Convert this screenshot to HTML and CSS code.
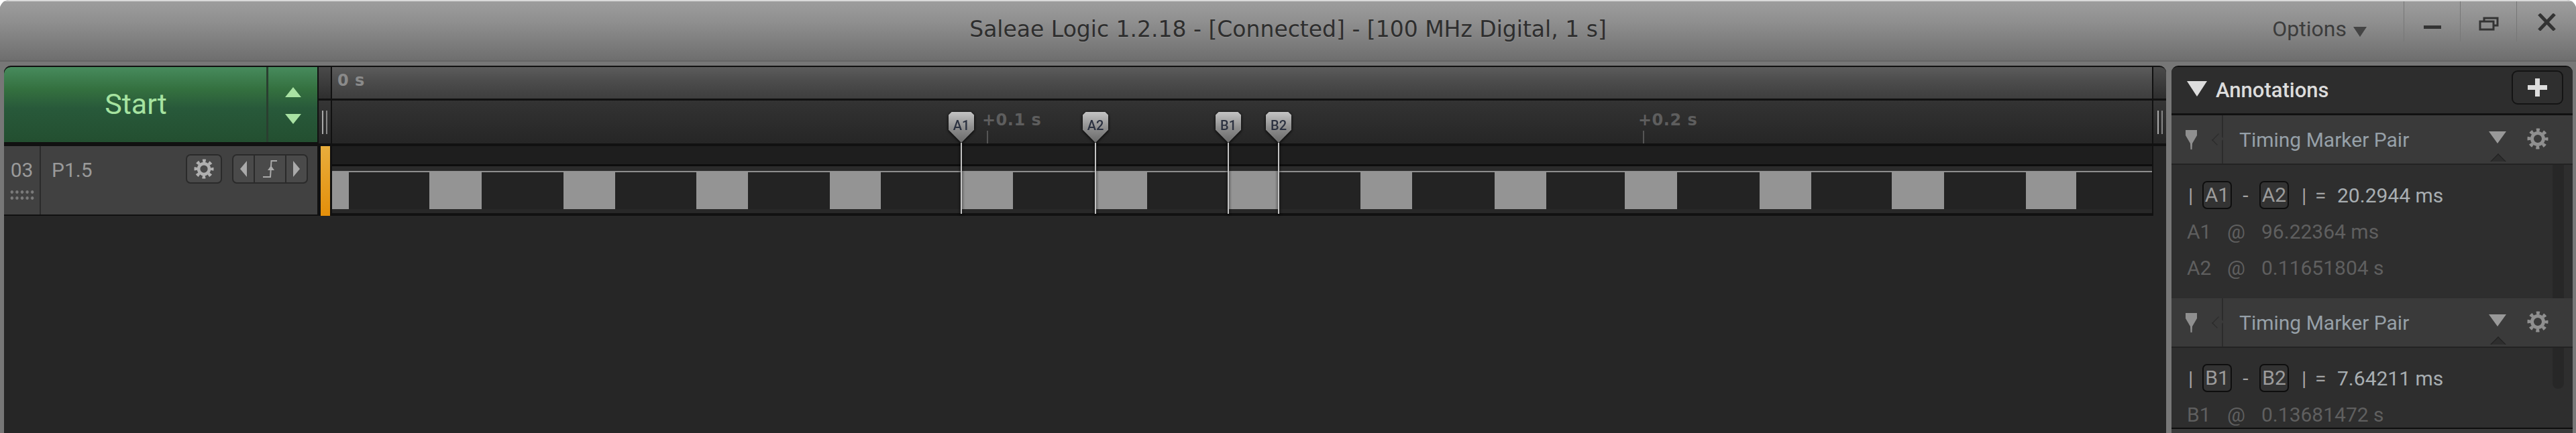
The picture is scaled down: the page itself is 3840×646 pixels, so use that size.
FILE: index.html
```html
<!DOCTYPE html>
<html lang="en">
<head>
  <meta charset="UTF-8" />
  <title>Saleae Logic 1.2.18 - [Connected] - [100 MHz Digital, 1 s]</title>
  <link rel="stylesheet" href="styles.css">
</head>
<body>
  <svg class="defs" width="0" height="0">
    <symbol id="gear" viewBox="0 0 32 32">
      <circle cx="16" cy="16" r="8.5" fill="none" stroke="currentColor" stroke-width="5" />
      <circle cx="16" cy="16" r="13" fill="none" stroke="currentColor" stroke-width="5" stroke-dasharray="5 5.21" stroke-dashoffset="2.5" />
    </symbol>
    <symbol id="pin" viewBox="0 0 19 29">
      <path d="M1 0 H18 V8 L11 20 L10.5 29 H8.5 L8 20 L1 8 Z" fill="currentColor" />
    </symbol>
  </svg>

  <div class="window">
    <header class="titlebar">
      <div class="title">Saleae Logic 1.2.18 - [Connected] - [100 MHz Digital, 1 s]</div>
      <div class="options">Options <span class="tri tri-down options-arrow"></span></div>
      <div class="win-btn">
        <svg width="26" height="5"><rect width="26" height="5" fill="#333" /></svg>
      </div>
      <div class="win-btn">
        <svg width="30" height="21" viewBox="0 0 30 21" fill="none" stroke="#333" stroke-width="3">
          <path d="M8 6 V2 H28 V13 H22" />
          <rect x="2" y="7" width="20" height="12" />
        </svg>
      </div>
      <div class="win-btn">
        <svg width="27" height="26" viewBox="0 0 27 26" fill="none" stroke="#333" stroke-width="5">
          <path d="M2 1 L25 25 M25 1 L2 25" />
        </svg>
      </div>
    </header>

    <main class="frame">
      <section class="workspace">
        <div class="top-row">
          <div class="start-btn">
            <div class="start-label">Start</div>
            <div class="start-arrows">
              <span class="tri tri-up start-arrow"></span>
              <span class="tri tri-down start-arrow"></span>
            </div>
          </div>
          <div class="ruler">
            <div class="ruler-line ruler-major">
              <div class="ruler-cap"></div>
              <div class="ruler-main"><span class="tick-zero">0 s</span></div>
              <div class="ruler-cap ruler-cap-end"></div>
            </div>
            <div class="ruler-line ruler-minor">
              <div class="ruler-cap"><span class="grip"></span></div>
              <div class="ruler-main"></div>
              <div class="ruler-cap ruler-cap-end"><span class="grip"></span></div>
            </div>
          </div>
        </div>

        <div class="channel-row">
          <div class="channel-info">
            <div class="channel-num">
              <span>03</span>
              <span class="dots"></span>
            </div>
            <div class="channel-name">P1.5</div>
            <div class="tool-btn gear-btn"><svg class="gear-icon"><use href="#gear" /></svg></div>
            <div class="tool-btn edge-group">
              <div class="edge-side"><span class="tri tri-left"></span></div>
              <div class="edge-mid">
                <svg width="22" height="26" viewBox="0 0 22 26" fill="none" stroke="#aaa" stroke-width="2">
                  <path d="M0 25 H11 L12.5 1 H21" />
                  <path d="M7 15 H17 L12 8 Z" fill="#aaa" stroke="none" />
                </svg>
              </div>
              <div class="edge-side"><span class="tri tri-right"></span></div>
            </div>
          </div>
          <div class="trigger-bar"></div>
          <div class="signal">
            <div class="signal-top"></div>
            <svg class="wave" width="2713" height="70" viewBox="0 0 2713 70">
              <rect width="2713" height="2" y="7" fill="#8e8e8e" />
              <g fill="#949494">
                <rect x="0" y="8" width="25" height="56" />
                <rect x="145" y="8" width="78" height="56" />
                <rect x="345" y="8" width="77" height="56" />
                <rect x="543" y="8" width="77" height="56" />
                <rect x="742" y="8" width="76" height="56" />
                <rect x="938" y="8" width="77" height="56" />
                <rect x="1138" y="8" width="77" height="56" />
                <rect x="1336" y="8" width="75" height="56" />
                <rect x="1533" y="8" width="77" height="56" />
                <rect x="1733" y="8" width="77" height="56" />
                <rect x="1927" y="8" width="78" height="56" />
                <rect x="2128" y="8" width="77" height="56" />
                <rect x="2325" y="8" width="78" height="56" />
                <rect x="2525" y="8" width="75" height="56" />
              </g>
            </svg>
          </div>
          <div class="ruler-cap ruler-cap-end channel-cap"></div>
        </div>

        <div class="empty-area"></div>

        <!-- time labels and markers sit on the timeline by time value -->
        <div class="tick-label" style="left: 1458px">+0.1 s</div>
        <div class="tick-mark" style="left: 1465px"></div>
        <div class="tick-label" style="left: 2436px">+0.2 s</div>
        <div class="tick-mark" style="left: 2443px"></div>

        <div class="marker" style="left: 1408px"><span class="marker-tag">A1</span><span class="marker-line"></span></div>
        <div class="marker" style="left: 1608px"><span class="marker-tag">A2</span><span class="marker-line"></span></div>
        <div class="marker" style="left: 1806px"><span class="marker-tag">B1</span><span class="marker-line"></span></div>
        <div class="marker" style="left: 1881px"><span class="marker-tag">B2</span><span class="marker-line"></span></div>
      </section>

      <aside class="annotations">
        <div class="ann-header">
          <span class="tri tri-down ann-arrow"></span>
          <span class="ann-title">Annotations</span>
          <div class="add-btn">
            <svg width="29" height="27" viewBox="0 0 29 27"><path d="M11 0 H18 V10 H29 V17 H18 V27 H11 V17 H0 V10 H11 Z" fill="#ddd" /></svg>
          </div>
        </div>

        <div class="ann-list">
          <div class="ann-scroll"></div>

          <div class="card">
            <div class="card-head">
              <div class="card-pin"><svg class="pin-icon"><use href="#pin" /></svg></div>
              <div class="card-title">Timing Marker Pair</div>
              <span class="tri tri-down card-arrow"></span>
              <svg class="card-gear"><use href="#gear" /></svg>
              <span class="card-notch"></span>
            </div>
            <div class="card-body">
              <div class="calc-row">
                <span class="bar">|</span><span class="chip">A1</span><span class="minus">-</span><span class="chip">A2</span><span class="bar bar-end">|</span><span class="equals">=</span><span class="result">20.2944 ms</span>
              </div>
              <div class="pos-row"><span class="pos-name">A1</span><span class="pos-at">@</span><span>96.22364 ms</span></div>
              <div class="pos-row"><span class="pos-name">A2</span><span class="pos-at">@</span><span>0.11651804 s</span></div>
            </div>
          </div>

          <div class="card">
            <div class="card-head">
              <div class="card-pin"><svg class="pin-icon"><use href="#pin" /></svg></div>
              <div class="card-title">Timing Marker Pair</div>
              <span class="tri tri-down card-arrow"></span>
              <svg class="card-gear"><use href="#gear" /></svg>
              <span class="card-notch"></span>
            </div>
            <div class="card-body">
              <div class="calc-row">
                <span class="bar">|</span><span class="chip">B1</span><span class="minus">-</span><span class="chip">B2</span><span class="bar bar-end">|</span><span class="equals">=</span><span class="result">7.64211 ms</span>
              </div>
              <div class="pos-row"><span class="pos-name">B1</span><span class="pos-at">@</span><span>0.13681472 s</span></div>
            </div>
          </div>
        </div>
        <div class="ann-footer"></div>
      </aside>
    </main>
  </div>
</body>
</html>
```

FILE: styles.css
```css
* {
  box-sizing: border-box;
  font-family: Roboto, "Liberation Sans", sans-serif;
}

html, body {
  height: 100%;
}

body {
  margin: 0;
  background-color: #fff;
  overflow: hidden;
}

.defs {
  position: absolute;
}

.window {
  display: flex;
  flex-direction: column;
  height: 646px;
  background-color: #777;
  border-radius: 14px 14px 0 0;
  overflow: hidden;
}

/* Triangles */
.tri {
  display: inline-block;
  width: 0;
  height: 0;
  border-style: solid;
  border-color: transparent;
}

.tri-up {
  border-width: 0 12px 15px 12px;
  border-bottom-color: #a9e2a3;
}

.tri-down {
  border-width: 15px 12px 0 12px;
  border-top-color: #a9e2a3;
}

.tri-left {
  border-width: 12px 10px 12px 0;
  border-right-color: #aaa;
}

.tri-right {
  border-width: 12px 0 12px 10px;
  border-left-color: #aaa;
}

/* Title bar */
.titlebar {
  display: flex;
  align-items: flex-start;
  flex: 0 0 92px;
  position: relative;
  background: linear-gradient(to bottom, #9c9c9c 2%, #8f8f8f 35%, #6e6e6e 100%);
  border-top: 2px solid #d9d9d9;
  border-bottom: 2px solid #666;
}

.title {
  position: absolute;
  left: 0;
  right: 0;
  top: 22px;
  text-align: center;
  font-family: "DejaVu Sans", sans-serif;
  font-size: 33px;
  color: #2e2e2e;
  text-shadow: 0 1px 0 rgba(255,255,255,0.15);
}

.options {
  display: flex;
  align-items: center;
  gap: 10px;
  margin-left: auto;
  margin-right: 55px;
  margin-top: 22px;
  font-size: 32px;
  color: #3c3c3c;
}

.options-arrow {
  border-width: 15px 10px 0 10px;
  border-top-color: #444;
  margin-top: 8px;
}

.win-btn {
  display: flex;
  align-items: flex-start;
  justify-content: center;
  width: 84px;
  height: 60px;
  border-left: 1px solid #777;
}

.win-btn:nth-of-type(3) svg { margin-top: 36px; }
.win-btn:nth-of-type(4) svg { margin-top: 23px; }
.win-btn:nth-of-type(5) { width: 89px; }
.win-btn:nth-of-type(5) svg { margin-top: 18px; }

/* Main frame */
.frame {
  display: flex;
  flex: 1;
  min-height: 0;
  padding: 6px 5px 0 6px;
  gap: 8px;
  background-color: #777;
}

.workspace {
  display: flex;
  flex-direction: column;
  position: relative;
  width: 3223px;
  background-color: #262626;
  border-top: 2px solid #111;
  border-radius: 10px 10px 0 0;
  overflow: hidden;
}

.top-row {
  display: flex;
  flex: 0 0 118px;
  background-color: #111;
}

.start-btn {
  display: flex;
  flex: 0 0 467px;
  height: 112px;
  background: linear-gradient(to bottom, #478b5d 0%, #34703f 30%, #28593a 55%, #234f30 100%);
  border-radius: 10px 0 0 0;
}

.start-label {
  flex: 1;
  padding-top: 30px;
  padding-left: 2px;
  text-align: center;
  font-size: 43px;
  line-height: 50px;
  color: #a6e3a0;
}

.start-arrows {
  display: flex;
  flex: 0 0 76px;
  flex-direction: column;
  align-items: center;
  gap: 25px;
  padding-top: 30px;
  border-left: 3px solid #2a3f30;
}

.ruler {
  display: flex;
  flex: 1;
  flex-direction: column;
  gap: 3px;
  margin-left: 2px;
}

.ruler-line {
  display: flex;
  gap: 2px;
}

.ruler-major {
  height: 47px;
}

.ruler-minor {
  height: 64px;
}

.ruler-cap {
  display: flex;
  align-items: center;
  justify-content: center;
  flex: 0 0 18px;
  background: linear-gradient(to bottom, #353535, #262626);
}

.ruler-major .ruler-cap {
  background: linear-gradient(to bottom, #4a4a4a, #2e2e2e);
}

.ruler-cap-end {
  flex: 0 0 19px;
}

.ruler-main {
  flex: 1;
  background: linear-gradient(to bottom, #333, #262626);
}

.ruler-major .ruler-main {
  background: linear-gradient(to bottom, #5c5c5c 0%, #4c4c4c 45%, #3e3e3e 100%);
}

.tick-zero {
  display: block;
  padding-left: 8px;
  font-family: "DejaVu Sans", sans-serif;
  font-weight: bold;
  font-size: 24px;
  line-height: 40px;
  letter-spacing: 0.5px;
  color: #8a8a8a;
}

.grip {
  width: 8px;
  height: 35px;
  border-left: 2px solid #aaa;
  border-right: 2px solid #888;
}

/* Channel row */
.channel-row {
  display: flex;
  flex: 0 0 104px;
  background-color: #111;
}

.channel-info {
  display: flex;
  flex: 0 0 467px;
  height: 102px;
  background-color: #414141;
  color: #9a9a9a;
  font-size: 30px;
}

.channel-num {
  display: flex;
  flex: 0 0 55px;
  flex-direction: column;
  align-items: center;
  padding-top: 18px;
  border-right: 2px solid #2b2b2b;
}

.channel-num span:first-child {
  line-height: 36px;
}

.dots {
  width: 38px;
  height: 18px;
  margin-top: 10px;
  background-image: radial-gradient(circle, #7a7a7a 2px, transparent 2.6px);
  background-size: 7.6px 9px;
}

.channel-name {
  flex: 0 0 216px;
  padding: 18px 0 0 16px;
  line-height: 36px;
}

.tool-btn {
  display: flex;
  align-items: center;
  height: 44px;
  margin-top: 12px;
  background-color: #4a4a4a;
  border: 2px solid #2a2a2a;
  border-radius: 7px;
}

.gear-btn {
  justify-content: center;
  width: 54px;
  margin-right: 15px;
}

.gear-icon {
  width: 30px;
  height: 30px;
  color: #b0b0b0;
}

.edge-group {
  width: 113px;
}

.edge-side {
  display: flex;
  align-items: center;
  justify-content: center;
  flex: 0 0 30px;
  height: 100%;
}

.edge-mid {
  display: flex;
  align-items: center;
  justify-content: center;
  flex: 1;
  height: 100%;
  border-left: 2px solid #2a2a2a;
  border-right: 2px solid #2a2a2a;
}

.trigger-bar {
  flex: 0 0 14px;
  margin: 0 3px 0 5px;
  background: linear-gradient(to bottom, #e8ad3c, #e48f0a);
}

.signal {
  flex: 1;
  display: flex;
  flex-direction: column;
  background-color: #111;
}

.signal-top {
  flex: 0 0 30px;
  background-color: #1e1e1e;
  border-bottom: 3px solid #0e0e0e;
}

.wave {
  display: block;
  background: linear-gradient(to bottom, #2b2b2b 7px, #232323 7px, #232323 64px, #282828 64px);
}

.channel-cap {
  margin-left: 0;
  flex: 0 0 21px;
  background: #262626;
  border-left: 2px solid #111;
}

.empty-area {
  flex: 1;
}

/* Items placed on the timeline */
.tick-label {
  position: absolute;
  top: 63px;
  font-family: "DejaVu Sans", sans-serif;
  font-weight: bold;
  font-size: 24px;
  line-height: 32px;
  letter-spacing: 0.5px;
  color: #5e5e5e;
}

.tick-mark {
  position: absolute;
  top: 95px;
  width: 2px;
  height: 19px;
  background-color: #555;
}

.marker {
  position: absolute;
  top: 67px;
  display: flex;
  flex-direction: column;
  align-items: center;
  width: 38px;
  filter: drop-shadow(0 1px 2px #000);
}

.marker-tag {
  display: block;
  width: 38px;
  height: 46px;
  padding-top: 9px;
  text-align: center;
  font-size: 20px;
  font-weight: 500;
  line-height: 22px;
  color: #2b3140;
  background: linear-gradient(to bottom, #c4c4c4, #8f8f8f 50%, #6a6a6a);
  clip-path: polygon(12% 0, 88% 0, 100% 10%, 100% 58%, 50% 100%, 0 58%, 0 10%);
}

.marker-line {
  width: 2px;
  height: 106px;
  background-color: #c4c4c4;
}

/* Annotations panel */
.annotations {
  display: flex;
  flex-direction: column;
  flex: 1;
  background-color: #2e2e2e;
  border-top: 2px solid #111;
  border-radius: 10px 10px 0 0;
  overflow: hidden;
}

.ann-header {
  display: flex;
  align-items: center;
  flex: 0 0 72px;
  padding: 0 14px 0 23px;
  background-color: #2d2d2d;
  border-bottom: 3px solid #111;
}

.ann-arrow {
  border-width: 23px 15px 0 15px;
  border-top-color: #ddd;
  margin-top: -5px;
}

.ann-title {
  margin-left: 13px;
  font-size: 31px;
  font-weight: 500;
  color: #dcdcdc;
}

.add-btn {
  display: flex;
  align-items: center;
  justify-content: center;
  width: 77px;
  height: 51px;
  margin-left: auto;
  margin-top: -8px;
  background-color: #2f2f2f;
  border: 2px solid #141414;
  border-radius: 9px;
}

.ann-list {
  position: relative;
  flex: 1;
  min-height: 0;
  overflow: hidden;
}

.ann-scroll {
  position: absolute;
  top: 0;
  right: 13px;
  width: 17px;
  height: 408px;
  background-color: rgba(0,0,0,0.14);
  border-radius: 0 0 8px 8px;
}

.card-head {
  display: flex;
  align-items: center;
  position: relative;
  height: 74px;
  background-color: #3a3a3a;
  border-bottom: 2px solid #232323;
  color: #959595;
}

.card-pin {
  display: flex;
  align-items: center;
  justify-content: center;
  position: relative;
  flex: 0 0 77px;
  height: 100%;
  padding-right: 16px;
  border-right: 2px solid #2c2c2c;
}

.card-pin::after {
  content: "";
  position: absolute;
  right: -2px;
  top: 26px;
  width: 14px;
  height: 18px;
  background-color: #3a3a3a;
  border-left: 2px solid #2c2c2c;
  border-bottom: 2px solid #2c2c2c;
  transform: translateX(0) rotate(45deg) scale(0.7);
}

.pin-icon {
  width: 19px;
  height: 29px;
  color: #8f8f8f;
}

.card-title {
  flex: 0 0 396px;
  padding-left: 24px;
  font-size: 30px;
  color: #96a0a8;
}

.card-arrow {
  border-width: 18px 13px 0 13px;
  border-top-color: #999;
  margin-top: -6px;
}

.card-gear {
  width: 32px;
  height: 32px;
  margin-left: 31px;
  margin-top: -2px;
  color: #8f8f8f;
}

.card-notch {
  position: absolute;
  left: 475px;
  bottom: -9px;
  width: 24px;
  height: 24px;
  background-color: #2e2e2e;
  border-left: 2px solid #232323;
  border-top: 2px solid #232323;
  transform: rotate(45deg) scale(0.72);
  clip-path: polygon(0 0, 100% 0, 0 100%);
}

.card-body {
  height: 199px;
  padding-top: 18px;
}

.calc-row {
  display: flex;
  align-items: center;
  height: 54px;
  padding-left: 25px;
  font-size: 30px;
  color: #a4a4a4;
}

.bar {
  width: 21px;
}

.chip {
  width: 44px;
  height: 42px;
  text-align: center;
  line-height: 38px;
  font-size: 30px;
  color: #9c9c9c;
  background-color: #333;
  border: 2px solid #0e0e0e;
  border-radius: 7px;
}

.minus {
  width: 41px;
  text-align: center;
}

.bar-end {
  width: 20px;
  margin-left: 19px;
}

.equals {
  width: 33px;
  margin-left: 0;
}

.result {
  color: #a8aeb2;
}

.pos-row {
  display: flex;
  align-items: center;
  height: 54px;
  padding-left: 23px;
  font-size: 30px;
  color: #5f5f5f;
}

.pos-name {
  width: 60px;
}

.pos-at {
  width: 51px;
}

.ann-footer {
  flex: 0 0 8px;
  background-color: #3a3a3a;
  border-top: 2px solid #0e0e0e;
}
```
